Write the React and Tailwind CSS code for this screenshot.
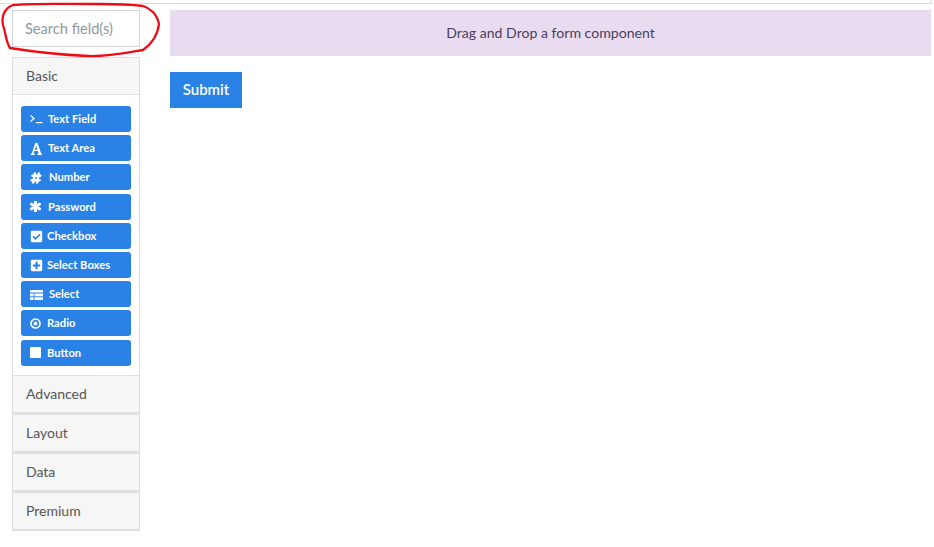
import { FaHashtag, FaAsterisk, FaCheckSquare, FaPlusSquare } from "react-icons/fa";

const font = "font-['Lato','Noto_Sans',sans-serif]";

function TerminalIcon() {
  return (
    <svg width="13" height="10" viewBox="0 0 13 10" fill="none" stroke="white" strokeWidth="1.2">
      <path d="M0.5 1.500 L4 4.500 L0.5 7.500" />
      <path d="M6 8.600 H12.500" />
    </svg>
  );
}

function SerifA() {
  return (
    <svg width="13" height="12" viewBox="0 0 13 12" fill="white">
      <path fillRule="evenodd" d="M5.200 0h2.400l3.300 9.800c.2.600.5.900 1.100 1V12H7.400v-1.200c.9 0 1.200-.2 1-.9l-.6-1.900H4.400l-.6 1.800c-.2.700 0 1 1 1V12H.8v-1.200c.7-.1 1.100-.4 1.300-1zM6.100 2.800L4.800 6.800h2.600z" />
    </svg>
  );
}

function TableIcon() {
  return (
    <svg width="13" height="10" viewBox="0 0 13 10" fill="white">
      <rect x="0" y="0" width="13" height="2.600" rx="0.5" />
      <rect x="0" y="3.500" width="3.600" height="2.800" />
      <rect x="4.500" y="3.500" width="8.500" height="2.800" />
      <rect x="0" y="7.200" width="3.600" height="2.800" />
      <rect x="4.500" y="7.200" width="8.500" height="2.800" />
    </svg>
  );
}

function RadioIcon() {
  return (
    <svg width="11" height="11" viewBox="0 0 11 11" fill="none">
      <circle cx="5.500" cy="5.500" r="4.500" stroke="white" strokeWidth="1.700" />
      <circle cx="5.500" cy="5.500" r="2" fill="white" />
    </svg>
  );
}

function StopIcon() {
  return <span className="block w-[11px] h-[11px] bg-white rounded-[1px]" />;
}

const components = [
  { label: "Text Field", icon: <TerminalIcon />, gap: "w-[18px]" },
  { label: "Text Area", icon: <SerifA />, gap: "w-[18px]" },
  { label: "Number", icon: <FaHashtag size={12} stroke="white" strokeWidth={40} />, gap: "w-[19px]" },
  { label: "Password", icon: <FaAsterisk size={11} stroke="white" strokeWidth={50} />, gap: "w-[18px]" },
  { label: "Checkbox", icon: <FaCheckSquare size={13} />, gap: "w-[17px]" },
  { label: "Select Boxes", icon: <FaPlusSquare size={13} />, gap: "w-[17px]" },
  { label: "Select", icon: <TableIcon />, gap: "w-[19px]" },
  { label: "Radio", icon: <RadioIcon />, gap: "w-[17px]" },
  { label: "Button", icon: <StopIcon />, gap: "w-[17px]" },
];

const groups = ["Advanced", "Layout", "Data", "Premium"];

function GroupHeader({ title }) {
  return (
    <div className="h-[39px] flex items-center px-[13px] pb-px bg-[#f6f6f6] border border-[#e0e0e0] border-b-2 text-[14px] text-[#555]">
      {title}
    </div>
  );
}

export default function App() {
  return (
    <div className={`relative w-[934px] h-[547px] bg-white overflow-hidden ${font}`}>
      <div className="h-1 w-[932px] border-r border-b border-[#dcdcdc]" />

      <div className="flex pt-[6px] pl-3">
        <aside className="w-[128px]">
          <input
            placeholder="Search field(s)"
            readOnly
            className="w-full h-[37px] px-3 pb-px border border-[#d3d6da] text-[14.600px] outline-none placeholder:text-[#8f979e]"
          />

          <div className="mt-[10px] h-[38px] flex items-center px-[13px] pb-[2px] bg-[#f6f6f6] border border-[#dfdfdf] text-[14px] text-[#555]">
            Basic
          </div>
          <div className="h-[280px] px-2 pt-[11px] border-x border-[#dfdfdf] flex flex-col gap-[3.200px]">
            {components.map((c) => (
              <div
                key={c.label}
                className="h-[26px] shrink-0 flex items-center pl-[9px] pt-[0.8px] rounded-[3px] bg-[#2a81e6] text-white text-[11.200px] font-bold"
              >
                <span className={`${c.gap} flex items-center shrink-0`}>{c.icon}</span>
                {c.label}
              </div>
            ))}
          </div>

          {groups.map((g) => (
            <GroupHeader key={g} title={g} />
          ))}
        </aside>

        <main className="ml-[30px] w-[761px]">
          <div className="h-[46px] bg-[#e9dbf0] flex items-center justify-center text-[14.100px] text-[#4a3f5c]">
            Drag and Drop a form component
          </div>
          <button className="mt-4 w-[72px] h-[36px] pb-px bg-[#2a81e6] text-white text-[15px] font-semibold">
            Submit
          </button>
        </main>
      </div>

      {/* red marker scribble round the search box */}
      <svg className="absolute left-0 top-0 pointer-events-none" width="170" height="70" viewBox="0 0 170 70" fill="none">
        <path
          d="M13 5 C30 3 60 4 100 4 C120 4 135 5 143 6 C150 8 157 14 159 24 C158 34 152 44 143 50 C125 53 105 57 88 56 C65 55 35 52 10 48 C6 42 6 34 3 25 C1 16 5 8 13 5 Z"
          stroke="#f00a14"
          strokeWidth="2.300"
        />
      </svg>
    </div>
  );
}
